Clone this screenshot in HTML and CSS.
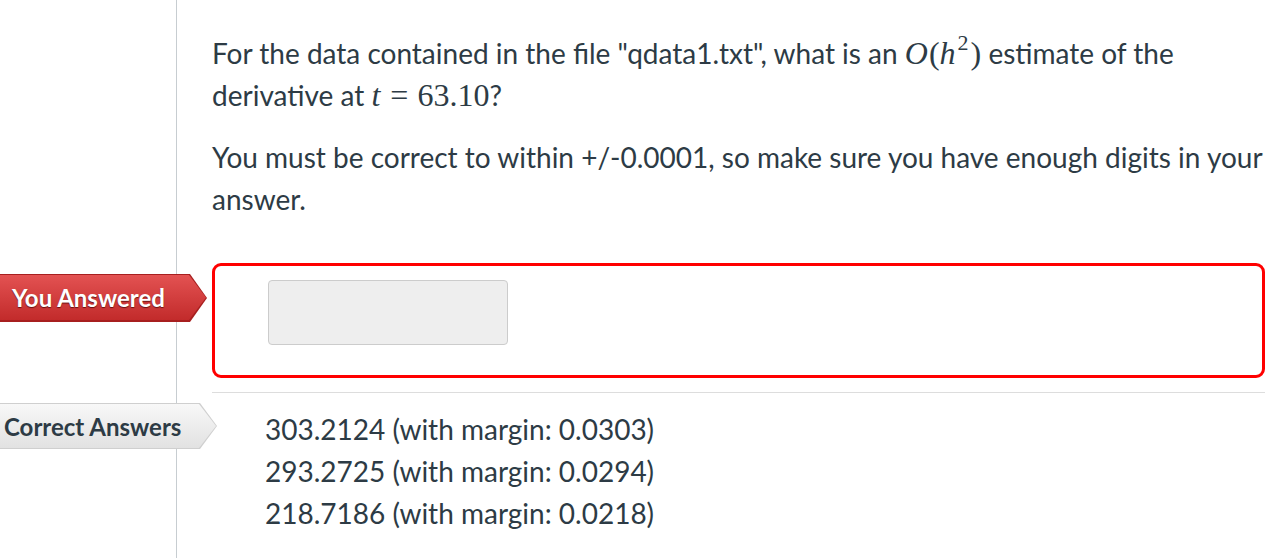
FILE: index.html
```html
<!DOCTYPE html>
<html lang="en">
<head>
<meta charset="utf-8">
<title>Quiz question</title>
<link rel="stylesheet" href="styles.css">
</head>
<body>
<div class="quiz">
  <div class="row">
    <div class="gutter"></div>
    <div class="content question">
      <p>For the data contained in the file "qdata1.txt", what is an <span class="math"><i>O</i>(<i>h</i><sup>2</sup>)</span> estimate of the derivative at <span class="math"><i>t</i><span class="eq">=</span>63.10</span>?</p>
      <p>You must be correct to within +/-0.0001, so make sure you have enough digits in your answer.</p>
    </div>
  </div>
  <div class="row">
    <div class="gutter">
      <div class="tag tag-red"><span class="tag-inner">You Answered</span></div>
    </div>
    <div class="content">
      <div class="answer-box">
        <div class="input"></div>
      </div>
    </div>
  </div>
  <div class="row">
    <div class="gutter"></div>
    <div class="content"><div class="divider"></div></div>
  </div>
  <div class="row">
    <div class="gutter">
      <div class="tag tag-gray"><span class="tag-inner">Correct Answers</span></div>
    </div>
    <div class="content correct">
      <div>303.2124 (with margin: 0.0303)</div>
      <div>293.2725 (with margin: 0.0294)</div>
      <div>218.7186 (with margin: 0.0218)</div>
    </div>
  </div>
</div>
</body>
</html>
```
FILE: styles.css
```css
html, body {
  margin: 0;
  padding: 0;
  background: #fff;
}
body {
  font-family: Lato, "Open Sans", sans-serif;
  color: #2d3b45;
  height: 558px;
  overflow: hidden;
}
.quiz {
  display: flex;
  flex-direction: column;
  height: 558px;
}
.row {
  display: grid;
  grid-template-columns: 177px 1fr;
}
.row:last-child {
  flex: 1;
}
.gutter {
  box-sizing: border-box;
  border-right: 1px solid #c7cdd1;
  position: relative;
}
.content {
  padding: 0 18px 0 35px;
}
.question {
  padding-top: 32px;
  padding-bottom: 43px;
  font-size: 28px;
  line-height: 42px;
}
.question p {
  margin: 0 0 20px 0;
}
.question p:last-child {
  margin-bottom: 0;
}
.math {
  font-family: "Liberation Serif", "DejaVu Serif", serif;
  font-size: 32px;
  line-height: 0;
  white-space: nowrap;
}
.math i {
  padding-right: 1px;
}
.math sup {
  font-size: 22px;
  line-height: 0;
  vertical-align: 14px;
  padding-left: 1px;
  padding-right: 2px;
}
.math .eq {
  padding: 0 9px;
}
.answer-box {
  border: 3px solid #ff0000;
  border-radius: 9px;
  padding: 14px 0 30px 53px;
}
.input {
  width: 238px;
  height: 63px;
  background: #eeeeee;
  border: 1px solid #cccccc;
  border-radius: 4px;
}
.divider {
  margin-top: 14px;
  border-top: 1px solid #dddddd;
}
.correct {
  padding-top: 15px;
  padding-left: 88px;
  font-size: 28px;
  line-height: 42px;
}
.tag {
  position: absolute;
  left: 0;
  height: 48px;
  box-sizing: border-box;
  display: flex;
  font-size: 24px;
  font-weight: bold;
  white-space: nowrap;
  clip-path: polygon(0 0, calc(100% - 17px) 0, 100% 50%, calc(100% - 17px) 100%, 0 100%);
}
.tag-inner {
  flex: 1;
  display: flex;
  align-items: center;
  clip-path: polygon(0 0, calc(100% - 17px) 0, 100% 50%, calc(100% - 17px) 100%, 0 100%);
}
.tag-red {
  top: 11px;
  width: 207px;
  padding: 1px 1px 2px 0;
  background: #a71f1f;
}
.tag-red .tag-inner {
  padding-left: 12px;
  color: #fff;
  text-shadow: 0 1px 1px rgba(60, 0, 0, 0.7);
  background: linear-gradient(#e35252, #c22b2b);
}
.tag-gray {
  top: 10px;
  width: 217px;
  height: 46px;
  padding: 1px 1px 1px 0;
  background: #cfcfcf;
}
.tag-gray .tag-inner {
  padding-left: 4px;
  color: #2d3b45;
  background: linear-gradient(#f8f8f8, #e2e2e2);
}
```
